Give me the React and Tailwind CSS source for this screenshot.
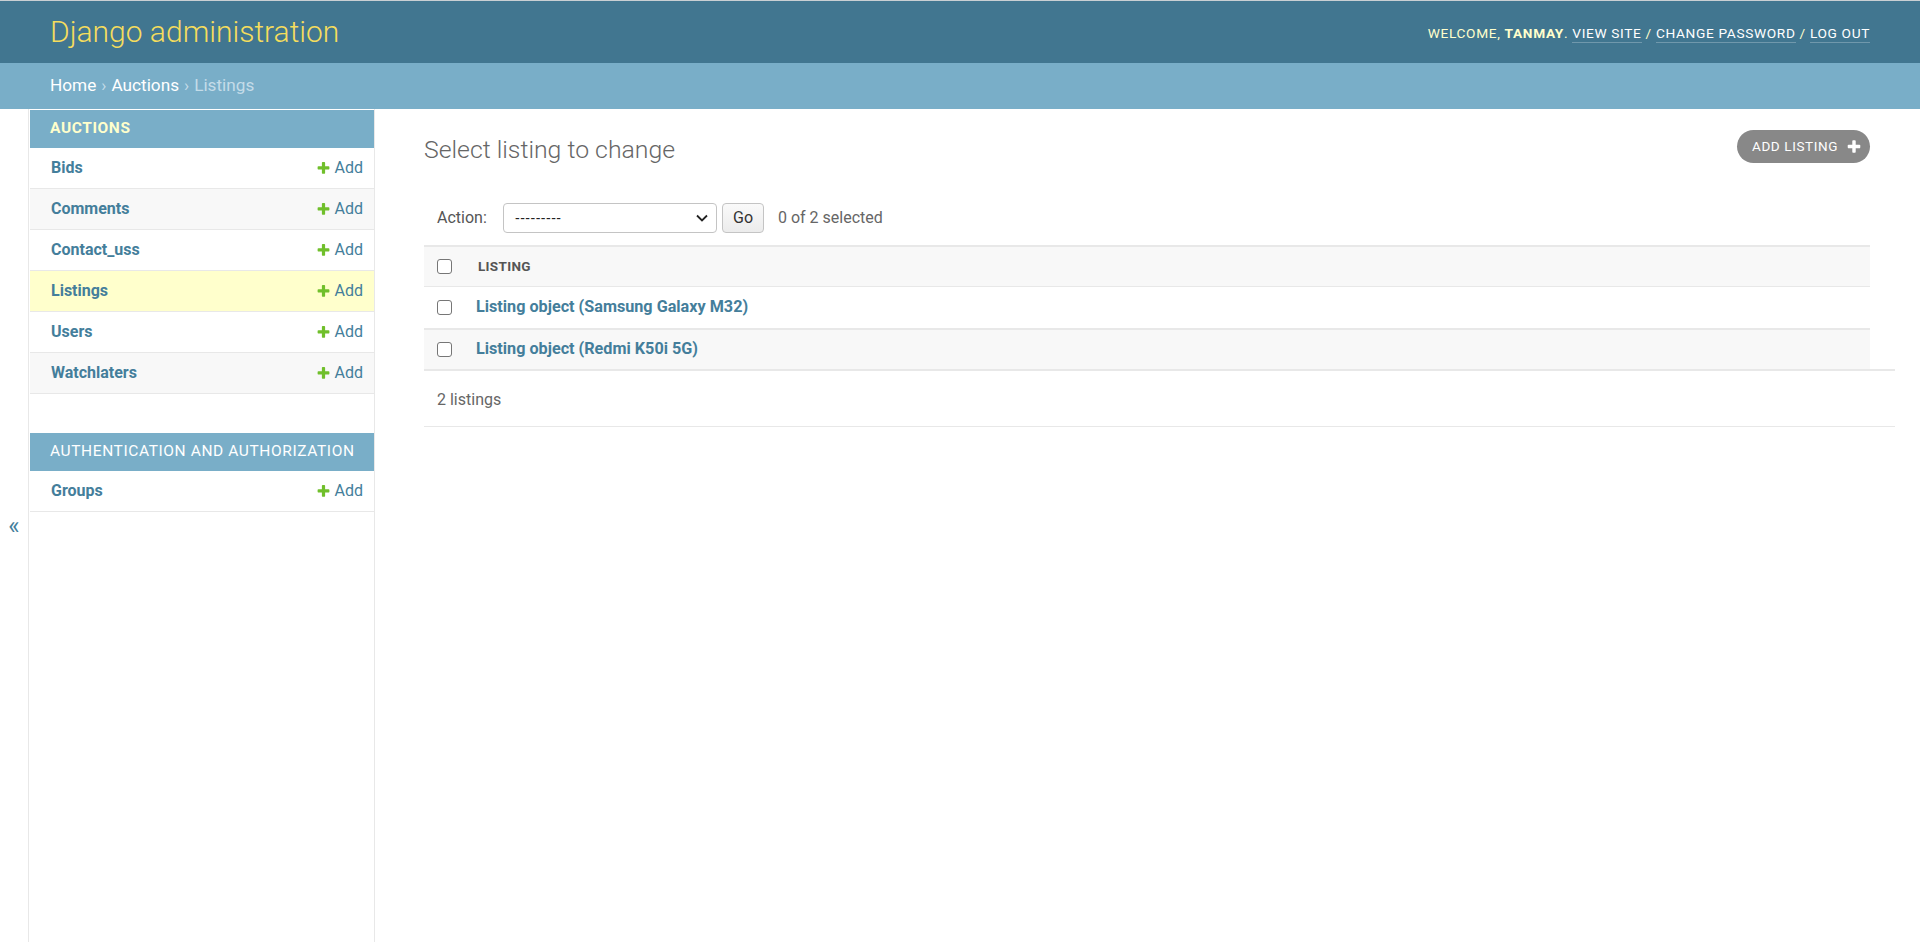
import React from "react";

// Django's addlink glyph
const PlusIcon = ({ className = "", color = "#70bf2b" }) => (
  <svg viewBox="0 0 1792 1792" className={className} fill={color}>
    <path d="M1600 736v192q0 40-28 68t-68 28h-416v416q0 40-28 68t-68 28h-192q-40 0-68-28t-28-68v-416h-416q-40 0-68-28t-28-68v-192q0-40 28-68t68-28h416v-416q0-40 28-68t68-28h192q40 0 68 28t28 68v416h416q40 0 68 28t28 68z" />
  </svg>
);

const auctionModels = [
  { name: "Bids", bg: "bg-white" },
  { name: "Comments", bg: "bg-[#f8f8f8]" },
  { name: "Contact_uss", bg: "bg-white" },
  { name: "Listings", bg: "bg-[#ffffcc]" },
  { name: "Users", bg: "bg-white" },
  { name: "Watchlaters", bg: "bg-[#f8f8f8]" },
];

const listings = [
  { id: 1, label: "Listing object (Samsung Galaxy M32)", bg: "bg-white", border: "" },
  { id: 2, label: "Listing object (Redmi K50i 5G)", bg: "bg-[#f8f8f8]", border: "border-t-2 border-[#e8e8e8]" },
];

function ModelRow({ name, bg }) {
  return (
    <div className={`h-[41px] flex items-center justify-between pl-[21px] pr-[11px] border-b border-[#e8e8e8] ${bg}`}>
      <a className="text-[16px] font-bold text-[#447e9b]">{name}</a>
      <a className="flex items-center gap-[4px] text-[16px] text-[#447e9b]">
        <PlusIcon className="w-[15px] h-[15px]" />
        Add
      </a>
    </div>
  );
}

function Checkbox() {
  return <div className="w-[15px] h-[15px] rounded-[3px] border-[1.5px] border-[#767676] bg-white" />;
}

function App() {
  return (
    <div className="w-full h-[942px] flex flex-col overflow-hidden bg-white font-['Roboto',sans-serif]">
      {/* HEADER */}
      <header className="h-[63px] shrink-0 bg-[#417690] border-t border-[#c9cfd3] px-[50px] flex items-center justify-between">
        <h1 className="text-[30px] font-light text-[#f5dd5d] leading-none">Django administration</h1>
        <div className="text-[13.7px] uppercase tracking-[0.65px] text-[#ffffcc] mt-[2px]">
          Welcome, <strong className="font-bold">Tanmay</strong>.{" "}
          <a className="text-white border-b border-white/25 pb-[1px]">View site</a> /{" "}
          <a className="text-white border-b border-white/25 pb-[1px]">Change password</a> /{" "}
          <a className="text-white border-b border-white/25 pb-[1px]">Log out</a>
        </div>
      </header>

      {/* BREADCRUMBS */}
      <div className="h-[46px] shrink-0 bg-[#79aec8] px-[50px] flex items-center text-[17.2px] text-[#c4dce8]">
        <a className="text-white">Home</a>
        <span className="mx-[5px]">›</span>
        <a className="text-white">Auctions</a>
        <span className="mx-[5px]">›</span>
        <span>Listings</span>
      </div>

      <div className="flex flex-1 min-h-0">
        {/* TOGGLE */}
        <div className="w-[29px] shrink-0 border-r border-[#e8e8e8] flex items-center justify-center">
          <span className="text-[24px] text-[#447e9b] leading-none">«</span>
        </div>

        {/* SIDEBAR */}
        <nav className="w-[346px] shrink-0 border-r border-[#e8e8e8] pt-[1px] pl-[1px]">
          <div className="h-[38px] bg-[#79aec8] flex items-center pl-[20px] text-[15.5px] font-bold uppercase tracking-[0.6px] text-[#ffffcc]">
            Auctions
          </div>
          {auctionModels.map((m) => (
            <ModelRow key={m.name} {...m} />
          ))}

          <div className="mt-[39px] h-[38px] bg-[#79aec8] flex items-center pl-[20px] text-[15.5px] uppercase tracking-[0.6px] text-white">
            Authentication and Authorization
          </div>
          <ModelRow name="Groups" bg="bg-white" />
        </nav>

        {/* CONTENT */}
        <main className="flex-1 min-w-0 pl-[49px] pr-[50px] pt-[21px]">
          <div className="flex justify-between items-start">
            <h1 className="mt-[5px] text-[24.8px] leading-[29px] font-light text-[#666]">Select listing to change</h1>
            <a className="h-[33px] rounded-full bg-[#888] pl-[15px] pr-[8px] flex items-center gap-[8px] text-[13.5px] uppercase tracking-[0.6px] text-white">
              Add listing
              <PlusIcon className="w-[16px] h-[16px]" color="#ffffff" />
            </a>
          </div>

          {/* ACTIONS */}
          <div className="mt-[39px] h-[30px] flex items-center pl-[13px] text-[16px] text-[#555]">
            <label className="w-[66px]">Action:</label>
            <div className="w-[214px] h-[30px] rounded-[4px] border border-[#c4c4c4] bg-white flex items-center justify-between pl-[11px] pr-[8px] text-[#222]">
              <span className="text-[14px] tracking-[0.5px] font-['Liberation_Sans',sans-serif]">---------</span>
              <svg viewBox="0 0 12 8" className="w-[12px] h-[8px]" fill="none" stroke="#222" strokeWidth="1.8">
                <polyline points="1,1.5 6,6.5 11,1.5" />
              </svg>
            </div>
            <button className="ml-[5px] w-[42px] h-[30px] rounded-[4px] border border-[#c4c4c4] bg-gradient-to-b from-[#fafafa] to-[#ececec] text-[16px] text-[#333]">
              Go
            </button>
            <span className="ml-[14px] text-[#666]">0 of 2 selected</span>
          </div>

          {/* TABLE */}
          <div className="mt-[12px]">
            <div className="h-[42px] bg-[#f8f8f8] border-t-2 border-b border-[#e8e8e8] flex items-center pl-[13px]">
              <Checkbox />
              <span className="ml-[26px] text-[13.5px] font-bold uppercase text-[#555] tracking-[0.3px]">Listing</span>
            </div>
            {listings.map((l) => (
              <div key={l.id} className={`h-[41px] flex items-center pl-[13px] ${l.bg} ${l.border}`}>
                <Checkbox />
                <a className="ml-[24px] text-[16.2px] font-bold text-[#447e9b]">{l.label}</a>
              </div>
            ))}
            <div className="mr-[-25px] h-[58px] pt-[2px] border-t-2 border-b border-[#e8e8e8] flex items-center pl-[13px] text-[16px] text-[#666]">
              2 listings
            </div>
          </div>
        </main>
      </div>
    </div>
  );
}

export default App;
